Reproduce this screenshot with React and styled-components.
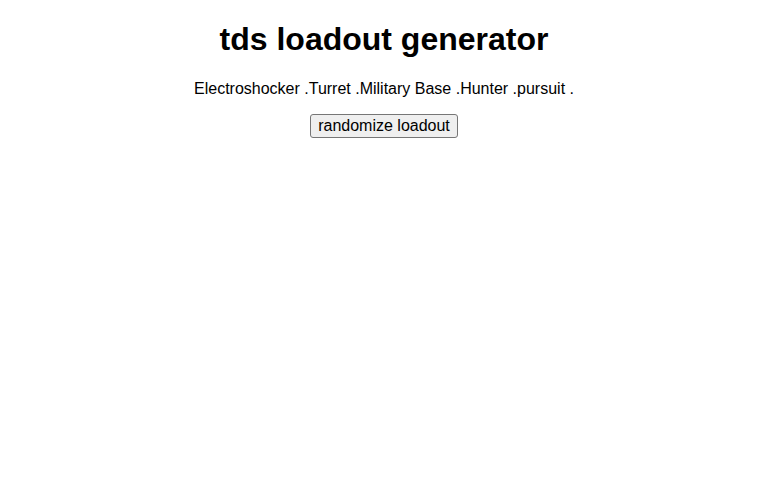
import React, { useState } from "react";
import styled, { createGlobalStyle } from "styled-components";

const GlobalStyle = createGlobalStyle`
  body {
    margin: 0;
    font-family: "Liberation Sans", Arial, sans-serif;
    background: #fff;
    color: #000;
  }
`;

const Page = styled.div`
  text-align: center;
  padding: 0 8px;
`;

const Title = styled.h1`
  font-size: 32px;
  font-weight: bold;
  margin: 21.44px 0;
`;

const Loadout = styled.p`
  font-size: 16px;
  margin: 16px 0;
`;

const RollButton = styled.button`
  font-family: inherit;
  font-size: 16px;
  color: #000;
  background: #efefef;
  border: 1px solid #767676;
  border-radius: 3px;
  padding: 2px 7px;
  cursor: pointer;

  &:hover {
    background: #e5e5e5;
  }
`;

const pools = {
  tower: ["Electroshocker", "Minigunner", "Ranger", "Accelerator", "Commander"],
  support: ["Turret", "DJ Booth", "Farm", "Military Base", "Medic"],
  base: ["Military Base", "Mortar", "Pursuit", "Cowboy", "Engineer"],
  hero: ["Hunter", "Freezer", "Scout", "Sledger", "Crook Boss"],
  last: ["pursuit", "gladiator", "brawler", "swarmer", "rocketeer"],
};

const pick = (list) => list[Math.floor(Math.random() * list.length)];

const App = () => {
  const [loadout, setLoadout] = useState([
    "Electroshocker",
    "Turret",
    "Military Base",
    "Hunter",
    "pursuit",
  ]);

  const randomize = () => {
    setLoadout(Object.values(pools).map(pick));
  };

  return (
    <Page>
      <GlobalStyle />
      <Title>tds loadout generator</Title>
      <Loadout>{loadout.map((t) => `${t} .`).join("")}</Loadout>
      <RollButton onClick={randomize}>randomize loadout</RollButton>
    </Page>
  );
};

export default App;
